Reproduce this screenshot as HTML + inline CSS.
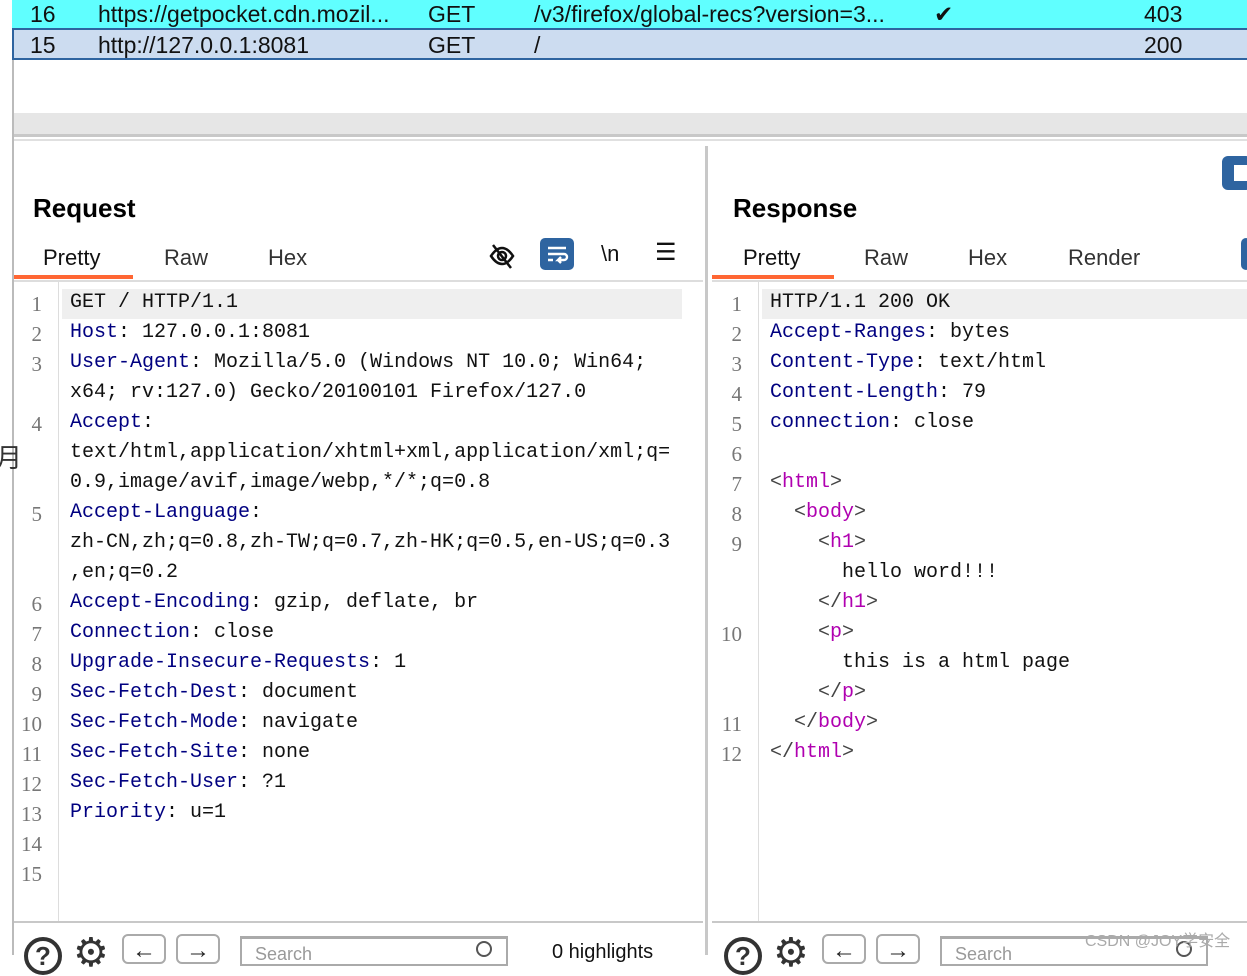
<!DOCTYPE html>
<html><head><meta charset="utf-8"><style>
*{margin:0;padding:0;box-sizing:border-box}
body{width:1247px;height:955px;overflow:hidden;background:#fff;position:relative;font-family:"Liberation Sans","Noto Sans CJK SC",sans-serif;color:#111}
.a{position:absolute;white-space:pre}
.row{position:absolute;left:12px;right:0;height:30px;font-size:23px;line-height:29px}
.code{position:absolute;font-family:"Liberation Mono","Noto Sans CJK SC",monospace;font-size:20px;line-height:30px;white-space:pre;color:#111}
.k{color:#000080}.t{color:#b000b0}.p{color:#444}
.num{position:absolute;font-family:"Liberation Serif",serif;font-size:21px;line-height:30px;color:#777;text-align:right;width:30px}
.tab{position:absolute;font-size:22px;color:#333;top:245px}
.btn{position:absolute;top:934px;width:44px;height:30px;border:2px solid #aaa;border-radius:6px;background:#fff;font-size:24px;line-height:30px;text-align:center;color:#222}
</style></head><body>
<div class="a" style="left:12px;top:0;width:2px;height:955px;background:#bbb"></div>
<div class="a" style="left:-4px;top:438px;font-size:26px;color:#333">月</div>
<div class="row" style="top:0;background:#60ffff;height:29px">
<span class="a" style="left:18px">16</span><span class="a" style="left:86px">https://getpocket.cdn.mozil...</span><span class="a" style="left:416px">GET</span><span class="a" style="left:522px">/v3/firefox/global-recs?version=3...</span><span class="a" style="left:922px">✔</span><span class="a" style="left:1132px">403</span></div>
<div class="row" style="top:28px;background:#ccdcf0;border-top:2px solid #2e64a0;border-bottom:2px solid #2e64a0;border-left:2px solid #2e64a0;height:32px">
<span class="a" style="left:16px;top:1px">15</span><span class="a" style="left:84px;top:1px">http://127.0.0.1:8081</span><span class="a" style="left:414px;top:1px">GET</span><span class="a" style="left:520px;top:1px">/</span><span class="a" style="left:1130px;top:1px">200</span></div>
<div class="a" style="left:14px;top:113px;width:1233px;height:21px;background:#e6e6e6"></div>
<div class="a" style="left:14px;top:134px;width:1233px;height:3px;background:#c8c8c8"></div>
<div class="a" style="left:14px;top:139px;width:1233px;height:2px;background:#e0e0e0"></div>
<div class="a" style="left:705px;top:146px;width:3px;height:809px;background:#c8c8c8"></div>
<div class="a" style="left:1222px;top:156px;width:30px;height:34px;background:#2e64a0;border-radius:6px"></div>
<div class="a" style="left:1234px;top:165px;width:13px;height:16px;background:#fff"></div>
<div class="a" style="left:1241px;top:238px;width:10px;height:32px;background:#2e64a0;border-radius:5px"></div>

<div class="a" style="left:33px;top:193px;font-size:26px;font-weight:bold;color:#000">Request</div>
<div class="a" style="left:733px;top:193px;font-size:26px;font-weight:bold;color:#000">Response</div>
<div class="tab" style="left:43px;color:#111">Pretty</div><div class="tab" style="left:164px">Raw</div><div class="tab" style="left:268px">Hex</div>
<div class="tab" style="left:743px;color:#111">Pretty</div><div class="tab" style="left:864px">Raw</div><div class="tab" style="left:968px">Hex</div><div class="tab" style="left:1068px">Render</div>
<div class="a" style="left:14px;top:275px;width:119px;height:4px;background:#ff6633"></div>
<div class="a" style="left:712px;top:275px;width:122px;height:4px;background:#ff6633"></div>
<div class="a" style="left:14px;top:280px;width:689px;height:2px;background:#ddd"></div>
<div class="a" style="left:712px;top:280px;width:535px;height:2px;background:#ddd"></div>
<svg class="a" style="left:488px;top:242px" width="28" height="28" viewBox="0 0 28 28"><path d="M3 14c4-6 8-8 11-8s7 2 11 8c-4 6-8 8-11 8s-7-2-11-8z" fill="none" stroke="#111" stroke-width="2.5"/><circle cx="14" cy="14" r="4" fill="none" stroke="#111" stroke-width="2.5"/><path d="M5 3l18 23" stroke="#111" stroke-width="2.5"/></svg>
<div class="a" style="left:540px;top:238px;width:34px;height:32px;background:#2e64a0;border-radius:5px"></div>
<svg class="a" style="left:540px;top:238px" width="34" height="32" viewBox="0 0 34 32"><path d="M8 10h18M8 16h16a3 3 0 010 6h-6l3-3M18 22l3 3M8 22h5" fill="none" stroke="#fff" stroke-width="2.4"/></svg>
<div class="a" style="left:601px;top:241px;font-size:22px;color:#111">\n</div>
<div class="a" style="left:655px;top:238px;font-size:24px;color:#111">☰</div>
<div class="a" style="left:58px;top:282px;width:1px;height:640px;background:#ddd"></div>
<div class="a" style="left:758px;top:282px;width:1px;height:640px;background:#ddd"></div>
<div class="a" style="left:62px;top:289px;width:620px;height:30px;background:#efefef"></div>
<div class="a" style="left:762px;top:289px;width:485px;height:30px;background:#efefef"></div>
<div class="num" style="left:12px;top:289px">1<br>2<br>3<br><br>4<br><br><br>5<br><br><br>6<br>7<br>8<br>9<br>10<br>11<br>12<br>13<br>14<br>15</div>
<div class="code" style="left:70px;top:288px">GET / HTTP/1.1
<span class="k">Host</span>: 127.0.0.1:8081
<span class="k">User-Agent</span>: Mozilla/5.0 (Windows NT 10.0; Win64;
x64; rv:127.0) Gecko/20100101 Firefox/127.0
<span class="k">Accept</span>:
text/html,application/xhtml+xml,application/xml;q=
0.9,image/avif,image/webp,*/*;q=0.8
<span class="k">Accept-Language</span>:
zh-CN,zh;q=0.8,zh-TW;q=0.7,zh-HK;q=0.5,en-US;q=0.3
,en;q=0.2
<span class="k">Accept-Encoding</span>: gzip, deflate, br
<span class="k">Connection</span>: close
<span class="k">Upgrade-Insecure-Requests</span>: 1
<span class="k">Sec-Fetch-Dest</span>: document
<span class="k">Sec-Fetch-Mode</span>: navigate
<span class="k">Sec-Fetch-Site</span>: none
<span class="k">Sec-Fetch-User</span>: ?1
<span class="k">Priority</span>: u=1</div>
<div class="num" style="left:712px;top:289px">1<br>2<br>3<br>4<br>5<br>6<br>7<br>8<br>9<br><br><br>10<br><br><br>11<br>12</div>
<div class="code" style="left:770px;top:288px">HTTP/1.1 200 OK
<span class="k">Accept-Ranges</span>: bytes
<span class="k">Content-Type</span>: text/html
<span class="k">Content-Length</span>: 79
<span class="k">connection</span>: close

<span class="p">&lt;</span><span class="t">html</span><span class="p">&gt;</span>
  <span class="p">&lt;</span><span class="t">body</span><span class="p">&gt;</span>
    <span class="p">&lt;</span><span class="t">h1</span><span class="p">&gt;</span>
      hello word!!!
    <span class="p">&lt;/</span><span class="t">h1</span><span class="p">&gt;</span>
    <span class="p">&lt;</span><span class="t">p</span><span class="p">&gt;</span>
      this is a html page
    <span class="p">&lt;/</span><span class="t">p</span><span class="p">&gt;</span>
  <span class="p">&lt;/</span><span class="t">body</span><span class="p">&gt;</span>
<span class="p">&lt;/</span><span class="t">html</span><span class="p">&gt;</span></div>
<div class="a" style="left:14px;top:921px;width:689px;height:2px;background:#c8c8c8"></div>
<div class="a" style="left:712px;top:921px;width:535px;height:2px;background:#c8c8c8"></div>
<div class="a" style="left:24px;top:937px;width:38px;height:38px;border:4px solid #333;border-radius:50%;font-size:26px;font-weight:bold;text-align:center;line-height:30px;color:#333">?</div>
<div class="a" style="left:724px;top:937px;width:38px;height:38px;border:4px solid #333;border-radius:50%;font-size:26px;font-weight:bold;text-align:center;line-height:30px;color:#333">?</div>
<div class="a" style="left:73px;top:930px;font-size:40px;color:#333">⚙</div>
<div class="a" style="left:773px;top:930px;font-size:40px;color:#333">⚙</div>
<div class="btn" style="left:122px">←</div><div class="btn" style="left:176px">→</div>
<div class="btn" style="left:822px">←</div><div class="btn" style="left:876px">→</div>
<div class="a" style="left:240px;top:936px;width:268px;height:30px;border:2px solid #aaa;border-top-width:3px"></div>
<div class="a" style="left:940px;top:936px;width:268px;height:30px;border:2px solid #aaa;border-top-width:3px"></div>
<div class="a" style="left:255px;top:944px;font-size:18px;color:#999">Search</div>
<div class="a" style="left:955px;top:944px;font-size:18px;color:#999">Search</div>
<div class="a" style="left:476px;top:941px;width:16px;height:16px;border:2px solid #555;border-radius:50%"></div>
<div class="a" style="left:1176px;top:941px;width:16px;height:16px;border:2px solid #555;border-radius:50%"></div>
<div class="a" style="left:552px;top:941px;font-size:20px;color:#111">0 highlights</div>
<div class="a" style="left:1085px;top:927px;font-size:16px;color:#aaa">CSDN @JOY学安全</div>
</body></html>
